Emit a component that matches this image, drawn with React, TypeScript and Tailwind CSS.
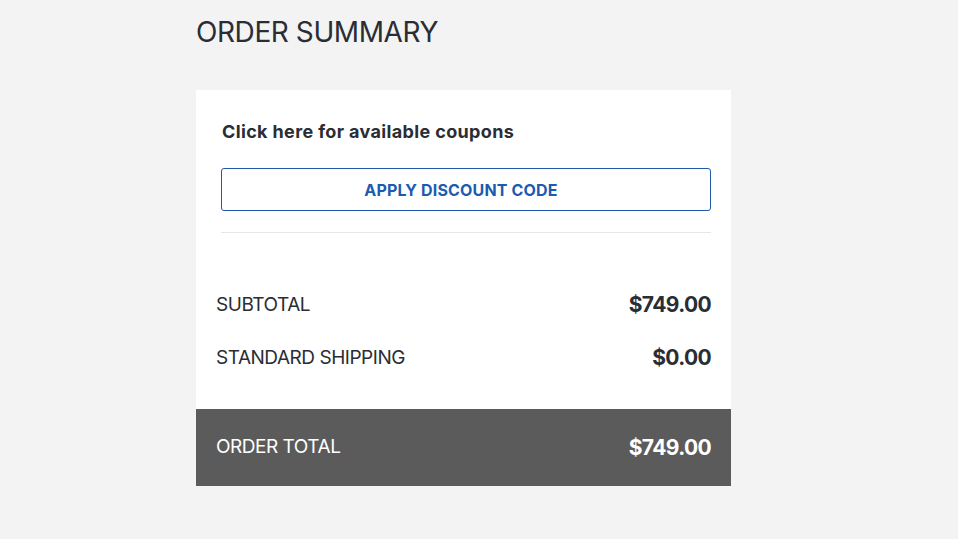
export default function App() {
  return (
    <div
      className="min-h-screen w-full bg-[#f3f3f3] text-[#2a2d33]"
      style={{ fontFamily: 'Inter, "Liberation Sans", sans-serif' }}
    >
      <div className="ml-[196px] w-[535px] pt-[13px]">
        {/* Title */}
        <h1 className="text-[28px] leading-[38px] font-normal tracking-[-0.015em]">ORDER SUMMARY</h1>

        {/* Card */}
        <div className="mt-[39px] bg-white">
          <div className="pl-[25px] pr-[20px] pt-[30px]">
            <button className="block pl-px text-[18px] leading-[24px] font-bold tracking-[0.02em] text-[#2a2d33]">
              Click here for available coupons
            </button>
            <button className="mt-[24px] flex h-[43px] w-full items-center justify-center rounded-[3px] border border-[#1f5aa6] pr-[10px] text-[16px] font-bold tracking-[0.01em] text-[#1c5bb0]">
              APPLY DISCOUNT CODE
            </button>
            <div className="mt-[21px] h-px bg-[#e6e6e6]" />
          </div>

          <div className="px-[20px] pt-[59px] pb-[38px]">
            <div className="flex items-center justify-between">
              <span className="text-[19px] leading-[26px] tracking-[-0.025em]">SUBTOTAL</span>
              <span className="text-[21px] leading-[26px] font-bold tracking-[-0.03em]">$749.00</span>
            </div>
            <div className="mt-[27px] flex items-center justify-between">
              <span className="text-[19px] leading-[26px] tracking-[-0.025em]">STANDARD SHIPPING</span>
              <span className="text-[21px] leading-[26px] font-bold tracking-[-0.03em]">$0.00</span>
            </div>
          </div>

          <div className="flex h-[77px] items-center justify-between bg-[#5b5b5b] px-[20px] text-white">
            <span className="text-[19px] tracking-[-0.025em]">ORDER TOTAL</span>
            <span className="text-[21px] font-bold tracking-[-0.03em]">$749.00</span>
          </div>
        </div>
      </div>
    </div>
  );
}
